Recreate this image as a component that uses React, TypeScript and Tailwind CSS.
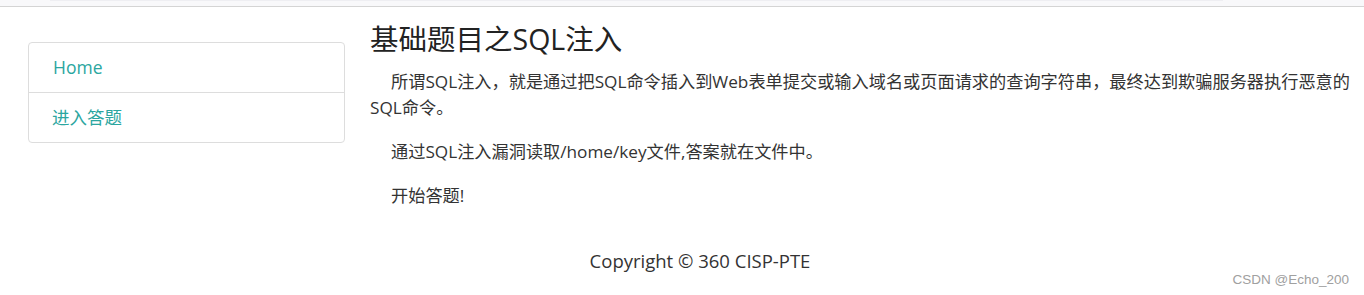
export default function App() {
  const font = {
    fontFamily: '"Open Sans", "Noto Sans CJK SC", sans-serif',
  };
  return (
    <div
      className="relative h-[295px] w-full overflow-hidden bg-white text-[#333]"
      style={font}
    >
      {/* navbar remnant */}
      <div className="h-[7px] border-b border-[#d4d4d4] bg-[#f8f8fa]">
        <div className="mx-[50px] mr-[141px] h-[1px] bg-[#eeeef2]" />
      </div>

      <div className="flex">
        <aside className="ml-[28px] mt-[35px] w-[317px] shrink-0">
          <ul className="rounded-[4px] border border-[#dddddd] text-[17.5px] text-[#2ba6a0]">
            <li className="flex h-[50px] items-center border-b border-[#dddddd] pl-[24px]">
              Home
            </li>
            <li className="flex h-[49px] items-center pl-[23px]">进入答题</li>
          </ul>
        </aside>

        <main className="ml-[25px] min-w-0 flex-1 pr-0">
          <h3 className="mt-[13px] text-[28.5px] leading-[38px] text-[#222]">
            基础题目之SQL注入
          </h3>
          <div className="mt-[11px] text-[17.2px] leading-[26px]">
            <p className="mb-[18px] indent-[21px]">
              所谓SQL注入，就是通过把SQL命令插入到Web表单提交或输入域名或页面请求的查询字符串，最终达到欺骗服务器执行恶意的SQL命令。
            </p>
            <p className="mb-[18px] indent-[21px]">
              通过SQL注入漏洞读取/home/key文件,答案就在文件中。
            </p>
            <p className="indent-[21px]">开始答题!</p>
          </div>
        </main>
      </div>

      <footer className="mt-[39px] pl-[36px] text-center text-[18.5px] leading-[26px] text-[#333]">
        Copyright © 360 CISP-PTE
      </footer>

      <div
        className="absolute bottom-[5px] right-[15px] text-[13.5px] text-[#a0a0a0]"
        style={{ fontFamily: '"Liberation Sans", Arial, sans-serif' }}
      >
        CSDN @Echo_200
      </div>
    </div>
  );
}
